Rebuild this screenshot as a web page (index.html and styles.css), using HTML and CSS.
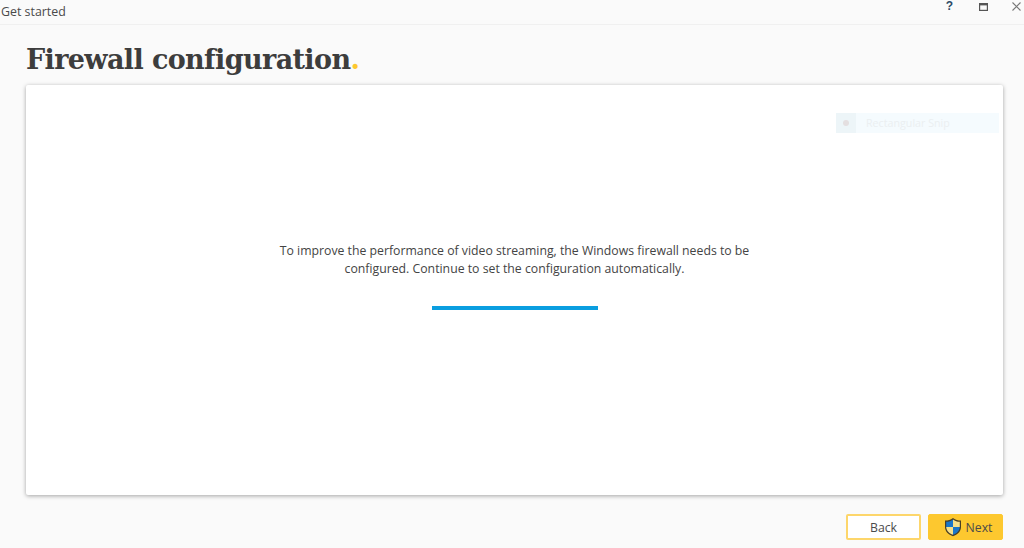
FILE: index.html
```html
<!DOCTYPE html>
<html lang="en">
<head>
<meta charset="utf-8">
<title>Get started</title>
<link rel="stylesheet" href="styles.css">
</head>
<body>
<div class="window">
  <header class="titlebar">
    <span class="titlebar-name">Get started</span>
    <div class="titlebar-controls">
      <span class="help">?</span>
      <svg class="ctl ctl-max" width="9" height="8" viewBox="0 0 9 8"><rect x="0.6" y="0.6" width="7.8" height="6.8" fill="none" stroke="#555" stroke-width="1.2"/><rect x="0" y="0" width="9" height="2.4" fill="#555"/></svg>
      <svg class="ctl ctl-close" width="9" height="9" viewBox="0 0 9 9"><path d="M0.5 0.5L8.5 8.5M8.5 0.5L0.5 8.5" stroke="#777" stroke-width="1.1" fill="none"/></svg>
    </div>
  </header>
  <main class="content">
    <h1 class="heading">Firewall configuration<span class="dot">.</span></h1>
    <section class="card">
      <div class="snip-ghost"><span class="snip-icon"><i></i></span><span class="snip-label">Rectangular Snip</span></div>
      <p class="message">To improve the performance of video streaming, the Windows firewall needs to be<br>configured. Continue to set the configuration automatically.</p>
      <div class="progress"></div>
    </section>
  </main>
  <footer class="actions">
    <button class="btn btn-back" type="button">Back</button>
    <button class="btn btn-next" type="button">
      <svg class="shield" width="18" height="20" viewBox="0 0 18 20">
        <path d="M9 1C6.500 3 4 3.600 1 3.600V10c0 4.500 3.400 7.600 8 9.200 4.600-1.600 8-4.700 8-9.200V3.600C14 3.600 11.500 3 9 1Z" fill="#4a3f25"/>
        <path d="M9 2.400V10H2.200V4.800C4.800 4.700 7 4 9 2.400Z" fill="#1a76c9"/>
        <path d="M9 2.400V10h6.800V4.800C13.200 4.700 11 4 9 2.400Z" fill="#f6e08a"/>
        <path d="M2.200 10H9v7.800C5 16.300 2.400 13.800 2.200 10Z" fill="#f6e08a"/>
        <path d="M15.800 10H9v7.800c4-1.500 6.600-4 6.800-7.800Z" fill="#1a76c9"/>
      </svg>
      <span>Next</span>
    </button>
  </footer>
</div>
</body>
</html>
```
FILE: styles.css
```css
* { box-sizing: border-box; }
html, body { margin: 0; height: 100%; }
body {
  background: #fafafa;
  color: #444;
  font-family: "Open Sans", "Noto Sans", sans-serif;
  overflow: hidden;
}
.window {
  display: flex;
  flex-direction: column;
  height: 548px;
}
.titlebar {
  display: flex;
  justify-content: space-between;
  align-items: flex-start;
  height: 25px;
  padding-left: 1px;
  border-bottom: 1px solid #f0f0f0;
}
.titlebar-name {
  font-size: 12.400px;
  line-height: 24px;
  color: #4a4a4a;
}
.titlebar-controls {
  display: flex;
  align-items: center;
  height: 13px;
  padding-right: 3px;
}
.help {
  font: bold 12px/13px "Liberation Sans", sans-serif;
  color: #2b4a66;
  margin-right: 26px;
}
.ctl-max { margin-right: 24px; }
.content {
  flex: 1;
  display: flex;
  flex-direction: column;
  padding: 0 21px 0 26px;
}
.heading {
  margin: 16px 0 0;
  height: 44px;
  font-family: "DejaVu Serif", serif;
  font-weight: 700;
  font-size: 27px;
  line-height: 38px;
  color: #3d3d3d;
  letter-spacing: -0.62px;
}
.dot { color: #fdc82f; }
.card {
  position: relative;
  height: 410px;
  background: #fff;
  border-radius: 2px;
  box-shadow: 0 1px 4px rgba(0, 0, 0, 0.35);
  display: flex;
  flex-direction: column;
  align-items: center;
  padding-top: 157px;
}
.message {
  margin: 0;
  font-size: 12.270px;
  line-height: 18px;
  text-align: center;
  color: #444;
}
.progress {
  width: 166px;
  height: 4px;
  margin-top: 28px;
  background: #0a9ee0;
}
.snip-ghost {
  position: absolute;
  top: 28px;
  right: 4px;
  width: 163px;
  height: 20px;
  display: flex;
  align-items: center;
  background: #f5fbfe;
}
.snip-icon {
  width: 20px;
  height: 20px;
  display: flex;
  align-items: center;
  justify-content: center;
  background: #edf5f8;
}
.snip-icon i {
  width: 6px;
  height: 6px;
  border-radius: 50%;
  background: #e4dfe0;
}
.snip-label {
  margin-left: 10px;
  font-size: 10.700px;
  color: #ebeff1;
}
.actions {
  display: flex;
  justify-content: flex-end;
  align-items: flex-start;
  gap: 7px;
  padding: 0 21px 0 0;
  height: 34px;
  flex: none;
}
.btn {
  width: 75px;
  height: 26px;
  border-radius: 2px;
  font-family: inherit;
  font-size: 12.250px;
  color: #4a4a4a;
  padding: 0;
  display: flex;
  align-items: center;
  justify-content: center;
}
.btn-back {
  background: #fff;
  border: 2px solid #fdd66b;
}
.btn-next {
  background: #fdc82f;
  border: 1px solid #fdc82f;
  gap: 4px;
  padding-left: 5px;
}
```
